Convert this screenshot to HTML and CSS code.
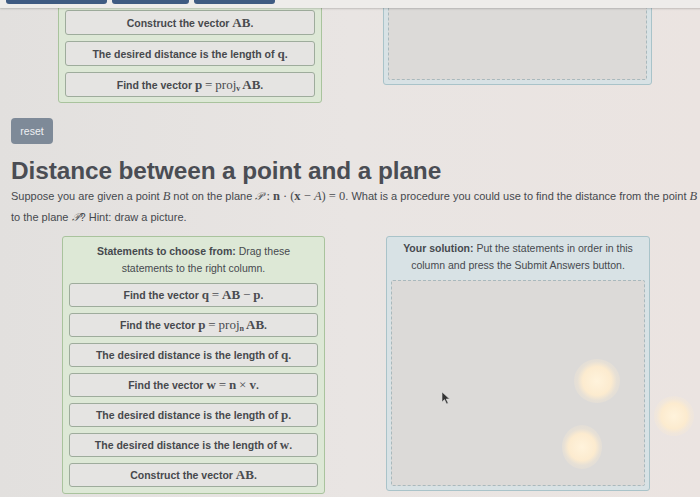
FILE: index.html
```html
<!DOCTYPE html>
<html>
<head>
<meta charset="utf-8">
<link rel="stylesheet" href="styles.css">
</head>
<body>
<div class="topbar">
  <span class="tbtn w1"></span><span class="tbtn w2"></span><span class="tbtn w3"></span>
</div>
<div class="page">
  <div class="cols top">
    <div class="choose">
      <div class="item"><span>Construct the vector <span class="m b">AB</span>.</span></div>
      <div class="item"><span>The desired distance is the length of <span class="m b">q</span>.</span></div>
      <div class="item"><span>Find the vector <span class="m b">p</span> <span class="m">=</span> <span class="m">proj<sub class="b">v</sub></span><span class="m b sp">AB</span>.</span></div>
    </div>
    <div class="solution">
      <div class="drop"></div>
    </div>
  </div>

  <button class="reset">reset</button>

  <h1 class="title">Distance between a point and a plane</h1>
  <p class="question">Suppose you are given a point <span class="m i">B</span> not on the plane <span class="m cal">𝒫</span> <span class="m">:</span> <span class="m b">n</span> <span class="m">·</span> <span class="m">(<span class="b">x</span> − <span class="i">A</span>) = 0</span>. What is a procedure you could use to find the distance from the point <span class="m i">B</span> to the plane <span class="m cal">𝒫</span>? Hint: draw a picture.</p>

  <div class="cols bottom">
    <div class="choose">
      <div class="head"><strong>Statements to choose from:</strong> Drag these statements to the right column.</div>
      <div class="item"><span>Find the vector <span class="m b">q</span> <span class="m">=</span> <span class="m b">AB</span> <span class="m">−</span> <span class="m b">p</span>.</span></div>
      <div class="item"><span>Find the vector <span class="m b">p</span> <span class="m">=</span> <span class="m">proj<sub class="b">n</sub></span><span class="m b sp">AB</span>.</span></div>
      <div class="item"><span>The desired distance is the length of <span class="m b">q</span>.</span></div>
      <div class="item"><span>Find the vector <span class="m b">w</span> <span class="m">=</span> <span class="m b">n</span> <span class="m">×</span> <span class="m b">v</span>.</span></div>
      <div class="item"><span>The desired distance is the length of <span class="m b">p</span>.</span></div>
      <div class="item"><span>The desired distance is the length of <span class="m b">w</span>.</span></div>
      <div class="item"><span>Construct the vector <span class="m b">AB</span>.</span></div>
    </div>
    <div class="solution">
      <div class="head"><strong>Your solution:</strong> Put the statements in order in this column and press the Submit Answers button.</div>
      <div class="drop"></div>
    </div>
  </div>
</div>

<span class="glare g1"></span>
<span class="glare g2"></span>
<span class="glare g3"></span>
<svg class="cursor" width="10" height="14" viewBox="0 0 10 14"><path d="M1 1 L1 11 L3.5 8.6 L5.6 13 L7.2 12.2 L5.2 8 L8.6 8 Z" fill="#333" stroke="#ddd" stroke-width="0.6"/></svg>
</body>
</html>
```

FILE: styles.css
```css
html, body {
  margin: 0;
  padding: 0;
  overflow: hidden;
  height: 100%;
}
body {
  background: linear-gradient(90deg, #e2e0de 0%, #e9e5e3 50%, #ebe4e1 100%);
  font-family: "Liberation Sans", Arial, sans-serif;
  color: #45484d;
  position: relative;
}
.topbar {
  position: absolute;
  left: 0;
  top: 0;
  width: 700px;
  height: 8px;
  background: #eeecea;
  box-shadow: 0 1px 2px rgba(0,0,0,0.18);
  display: flex;
  gap: 5px;
  padding-left: 6px;
  align-items: flex-start;
  z-index: 2;
}
.tbtn {
  display: block;
  height: 4px;
  background: #3f5b82;
  border-radius: 0 0 3px 3px;
}
.w1 { width: 101px; }
.w2 { width: 77px; }
.w3 { width: 81px; }

.page {
  width: 720px;
  padding-left: 11px;
  box-sizing: border-box;
}
.cols {
  display: flex;
  align-items: flex-start;
}
.top {
  margin-top: -14px;
  padding-left: 47px;
  gap: 61px;
}
.top .choose { width: 264px; padding-top: 23px; padding-bottom: 5px; }
.top .solution { width: 269px; padding-top: 14px; }
.top .solution .drop { height: 79px; margin-top: 0; }

.choose {
  box-sizing: border-box;
  background: #dde8d6;
  border: 1px solid #a9c39d;
  border-radius: 3px;
  padding: 6px 6px 6px;
  display: flex;
  flex-direction: column;
  gap: 6px;
}
.solution {
  box-sizing: border-box;
  background: #d8e2e5;
  border: 1px solid #a9c3c9;
  border-radius: 3px;
  padding: 3px 4px 4px;
}
.drop {
  box-sizing: border-box;
  background: #dcdad8;
  border: 1px dashed #a9b9bd;
  border-radius: 2px;
}
.item {
  box-sizing: border-box;
  height: 24px;
  background: #e5e4e2;
  border: 1px solid #9eac9c;
  border-radius: 3px;
  font-size: 10.5px;
  font-weight: bold;
  color: #47494d;
  display: flex;
  align-items: center;
  justify-content: center;
  white-space: nowrap;
}
.top .item { height: 25px; }
.m {
  font-family: "Liberation Serif", "DejaVu Serif", serif;
  font-size: 13px;
  font-weight: normal;
  color: #4a4c50;
}
.b { font-weight: bold; }
.i { font-style: italic; }
.sp { margin-left: 2px; }
.cal { font-family: "DejaVu Serif", serif; font-size: 11px; font-style: italic; }
.m sub { font-size: 8px; vertical-align: -2px; }

.reset {
  display: block;
  margin-top: 15px;
  width: 42px;
  height: 26px;
  background: #7e8a98;
  color: #eef0f3;
  border: none;
  border-radius: 4px;
  font-family: "Liberation Sans", Arial, sans-serif;
  font-size: 10.5px;
  padding: 0;
}
.title {
  margin: 12px 0 0;
  font-size: 24.4px;
  font-weight: bold;
  color: #4a4d54;
  line-height: 30px;
  letter-spacing: -0.1px;
}
.question {
  margin: 0;
  font-size: 11px;
  line-height: 21px;
  color: #46494e;
  width: 690px;
}
.question .m { font-size: 12.5px; }
.question .cal { font-size: 11px; }

.bottom {
  margin-top: 8px;
  padding-left: 51px;
  gap: 61px;
}
.bottom .choose { width: 263px; padding-bottom: 6px; }
.bottom .solution { width: 264px; }
.head {
  font-size: 10.5px;
  line-height: 16.5px;
  text-align: center;
  color: #46494e;
  padding: 0 18px 1px;
}
.bottom .solution .head { padding: 0 8px 7px; }
.bottom .solution .drop { height: 206px; }

.glare {
  position: absolute;
  border-radius: 50%;
  background: radial-gradient(circle, #fff3dc 0%, #fcebcf 45%, rgba(250,235,210,0.35) 62%, rgba(250,235,210,0) 100%);
  pointer-events: none;
}
.g1 { left: 574px; top: 359px; width: 46px; height: 44px; }
.g2 { left: 562px; top: 425px; width: 40px; height: 44px; }
.g3 { left: 654px; top: 396px; width: 40px; height: 40px; }
.cursor {
  position: absolute;
  left: 441px;
  top: 391px;
}
```
